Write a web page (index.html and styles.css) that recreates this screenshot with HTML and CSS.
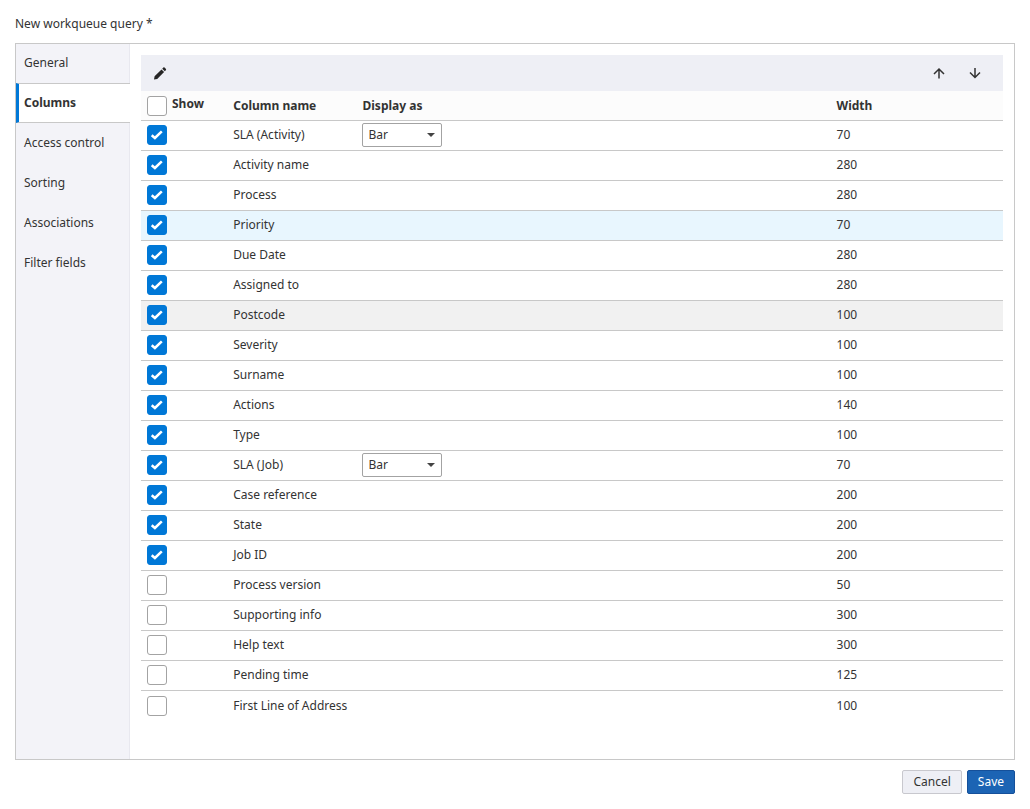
FILE: index.html
```html
<!DOCTYPE html>
<html lang="en">
<head>
<meta charset="utf-8">
<title>New workqueue query</title>
<link rel="stylesheet" href="styles.css">
</head>
<body>
<main class="dialog">
  <h1 class="title">New workqueue query *</h1>
  <div class="panel">
    <nav class="tabs">
      <a class="tab" href="#general">General</a>
      <a class="tab tab-active" href="#columns" aria-current="page">Columns</a>
      <a class="tab" href="#access">Access control</a>
      <a class="tab" href="#sorting">Sorting</a>
      <a class="tab" href="#associations">Associations</a>
      <a class="tab" href="#filters">Filter fields</a>
    </nav>
    <section class="content">
      <div class="toolbar">
        <button class="tool tool-edit" type="button" aria-label="Edit"><svg width="16" height="16" viewBox="0 0 16 16"><path fill="#262626" d="M2 14.500l.6-3.200 6.900-6.900 2.600 2.600-6.900 6.900zM10.200 3.700l1-1c.5-.5 1-.5 1.500 0l1.100 1.100c.5.5.5 1 0 1.500l-1 1z"/></svg></button>
        <span class="spacer"></span>
        <button class="tool" type="button" aria-label="Move up"><svg width="16" height="16" viewBox="0 0 16 16"><path fill="none" stroke="#333" stroke-width="1.500" d="M8 13.500V4M3 9L8 4L13 9"/></svg></button>
        <button class="tool" type="button" aria-label="Move down"><svg width="16" height="16" viewBox="0 0 16 16"><path fill="none" stroke="#333" stroke-width="1.500" d="M8 3V12.500M3 7.500L8 12.500L13 7.500"/></svg></button>
      </div>
      <table class="grid">
        <thead>
          <tr>
            <th class="col-show"><label class="show-all"><input class="check" type="checkbox"><span>Show</span></label></th>
            <th class="col-name">Column name</th>
            <th class="col-display">Display as</th>
            <th class="col-width">Width</th>
          </tr>
        </thead>
        <tbody>
          <tr><td><input class="check" type="checkbox" id="c1" checked></td><td><label for="c1">SLA (Activity)</label></td><td><select class="select" aria-label="Display SLA (Activity) as"><option>Bar</option></select></td><td>70</td></tr>
          <tr><td><input class="check" type="checkbox" id="c2" checked></td><td><label for="c2">Activity name</label></td><td></td><td>280</td></tr>
          <tr><td><input class="check" type="checkbox" id="c3" checked></td><td><label for="c3">Process</label></td><td></td><td>280</td></tr>
          <tr class="row-selected"><td><input class="check" type="checkbox" id="c4" checked></td><td><label for="c4">Priority</label></td><td></td><td>70</td></tr>
          <tr><td><input class="check" type="checkbox" id="c5" checked></td><td><label for="c5">Due Date</label></td><td></td><td>280</td></tr>
          <tr><td><input class="check" type="checkbox" id="c6" checked></td><td><label for="c6">Assigned to</label></td><td></td><td>280</td></tr>
          <tr class="row-hover"><td><input class="check" type="checkbox" id="c7" checked></td><td><label for="c7">Postcode</label></td><td></td><td>100</td></tr>
          <tr><td><input class="check" type="checkbox" id="c8" checked></td><td><label for="c8">Severity</label></td><td></td><td>100</td></tr>
          <tr><td><input class="check" type="checkbox" id="c9" checked></td><td><label for="c9">Surname</label></td><td></td><td>100</td></tr>
          <tr><td><input class="check" type="checkbox" id="c10" checked></td><td><label for="c10">Actions</label></td><td></td><td>140</td></tr>
          <tr><td><input class="check" type="checkbox" id="c11" checked></td><td><label for="c11">Type</label></td><td></td><td>100</td></tr>
          <tr><td><input class="check" type="checkbox" id="c12" checked></td><td><label for="c12">SLA (Job)</label></td><td><select class="select" aria-label="Display SLA (Job) as"><option>Bar</option></select></td><td>70</td></tr>
          <tr><td><input class="check" type="checkbox" id="c13" checked></td><td><label for="c13">Case reference</label></td><td></td><td>200</td></tr>
          <tr><td><input class="check" type="checkbox" id="c14" checked></td><td><label for="c14">State</label></td><td></td><td>200</td></tr>
          <tr><td><input class="check" type="checkbox" id="c15" checked></td><td><label for="c15">Job ID</label></td><td></td><td>200</td></tr>
          <tr><td><input class="check" type="checkbox" id="c16"></td><td><label for="c16">Process version</label></td><td></td><td>50</td></tr>
          <tr><td><input class="check" type="checkbox" id="c17"></td><td><label for="c17">Supporting info</label></td><td></td><td>300</td></tr>
          <tr><td><input class="check" type="checkbox" id="c18"></td><td><label for="c18">Help text</label></td><td></td><td>300</td></tr>
          <tr><td><input class="check" type="checkbox" id="c19"></td><td><label for="c19">Pending time</label></td><td></td><td>125</td></tr>
          <tr><td><input class="check" type="checkbox" id="c20"></td><td><label for="c20">First Line of Address</label></td><td></td><td>100</td></tr>
        </tbody>
      </table>
    </section>
  </div>
  <footer class="actions">
    <button class="btn" type="button">Cancel</button>
    <button class="btn btn-primary" type="button">Save</button>
  </footer>
</main>
</body>
</html>
```
FILE: styles.css
```css
* { box-sizing: border-box; }

body {
  margin: 0;
  background: #fff;
  color: #333;
  font: 12px/18px "Noto Sans", "Open Sans", sans-serif;
}

button, select, input { font: inherit; color: inherit; margin: 0; }

.dialog {
  display: flex;
  flex-direction: column;
  min-height: 100vh;
  padding: 15px;
}

.title { margin: 0 0 10px; font-size: 12px; line-height: 18px; font-weight: 400; }

.panel { display: flex; flex: 1; border: 1px solid #c8c8c8; }

.tabs {
  flex: none;
  width: 114px;
  background: #f3f3f8;
  border-right: 1px solid #e8e8ef;
}

.tab {
  display: block;
  height: 40px;
  padding: 0 8px;
  line-height: 38px;
  color: inherit;
  text-decoration: none;
}

.tab-active {
  margin: -1px -1px 1px 0;
  padding-left: 5px;
  border: solid #c8c8c8;
  border-width: 1px 0;
  border-left: 3px solid #0078d7;
  background: #fff;
  font-weight: 700;
}

.content { flex: 1; min-width: 0; padding: 11px; }

.toolbar {
  display: flex;
  align-items: center;
  height: 36px;
  padding: 0 10px;
  background: #eeeff5;
}

.tool {
  display: grid;
  place-items: center;
  width: 36px;
  height: 36px;
  padding: 0;
  border: 0;
  background: none;
}

.tool-edit { width: 18px; }

.tool svg { display: block; }

.spacer { flex: 1; }

.grid {
  width: 100%;
  table-layout: fixed;
  border-collapse: separate;
  border-spacing: 0;
}

.grid th, .grid td {
  height: 30px;
  padding: 0 6px;
  border-bottom: 1px solid #c8c8c8;
  text-align: left;
  vertical-align: middle;
}

.grid th { background: #fcfcfc; font-weight: 700; }
.grid td { padding-bottom: 2px; }
.grid tbody tr:last-child td { padding-bottom: 0; border-bottom: 0; }
.col-show { width: 10%; }
.col-name { width: 15%; }
.col-display { width: 55%; }

.row-selected { background: #e8f6fe; }
.row-hover { background: #f1f1f1; }

.show-all { display: flex; align-items: flex-start; gap: 5px; }
.show-all span { line-height: 16px; }

.check {
  appearance: none;
  display: block;
  flex: none;
  width: 20px;
  height: 20px;
  border: 1px solid #a3a3a3;
  border-radius: 3px;
  background: #fff;
}

.check:checked {
  border-color: #0078d7;
  background: #0078d7 url("data:image/svg+xml,%3Csvg xmlns='http://www.w3.org/2000/svg' viewBox='0 0 18 18'%3E%3Cpath d='M3.700 9.200L6.900 12L13.800 5.300' fill='none' stroke='white' stroke-width='2.500'/%3E%3C/svg%3E") center / 18px no-repeat;
}

.select {
  appearance: none;
  display: block;
  width: 80px;
  height: 24px;
  padding: 0 5px;
  border: 1px solid #a3a3a3;
  border-radius: 2px;
  background: #fff url("data:image/svg+xml,%3Csvg xmlns='http://www.w3.org/2000/svg' viewBox='0 0 8 4'%3E%3Cpath d='M0 0h8L4 4z' fill='%23444'/%3E%3C/svg%3E") right 6px center / 8px 4px no-repeat;
}

.actions {
  display: flex;
  justify-content: flex-end;
  gap: 5px;
  padding-top: 10px;
}

.btn {
  height: 24px;
  padding: 0 10px;
  border: 1px solid #c8c8ce;
  border-radius: 2px;
  background: #eeeff5;
}

.btn-primary { border-color: #15509a; background: #1c64b4; color: #fff; }
```
